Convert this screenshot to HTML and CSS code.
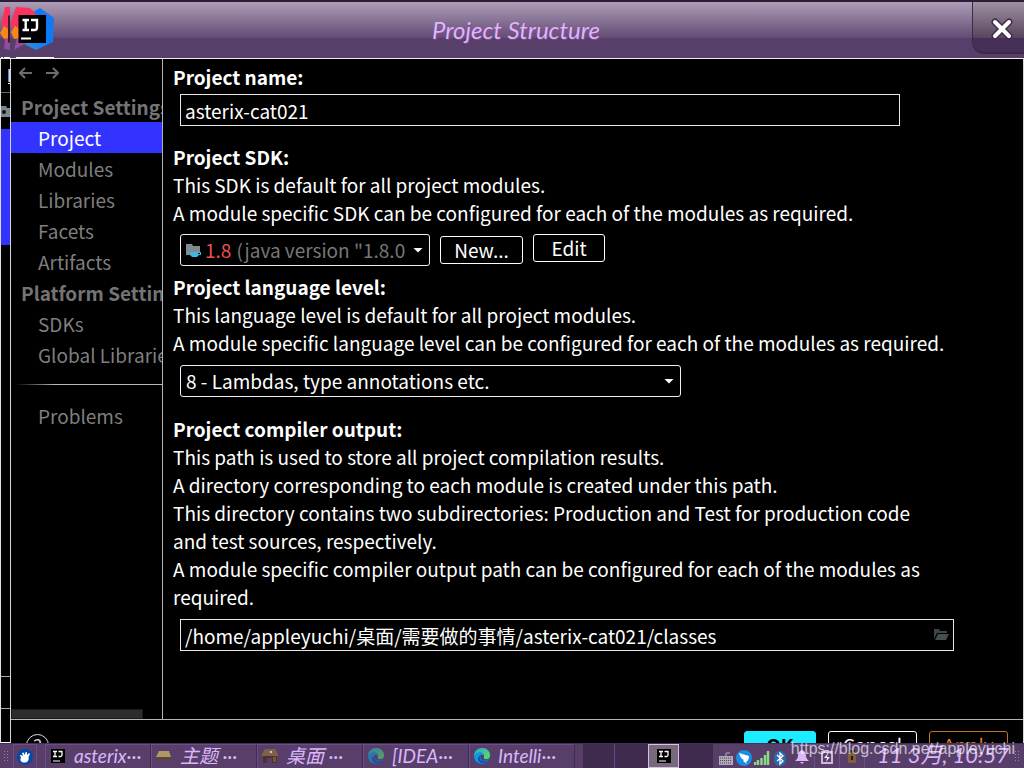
FILE: index.html
```html
<!DOCTYPE html>
<html lang="en">
<head>
<meta charset="utf-8">
<title>Project Structure</title>
<link rel="stylesheet" href="styles.css">
</head>
<body>
<svg class="defs" aria-hidden="true">
  <defs>
    <linearGradient id="ijBlue" x1="0" y1="1" x2="1" y2="0"><stop offset="0" stop-color="#3d8bd0"/><stop offset=".5" stop-color="#087cfa"/><stop offset="1" stop-color="#1d74ea"/></linearGradient>
    <linearGradient id="ijPink" x1="0" y1="0" x2="0" y2="1"><stop offset="0" stop-color="#fe315d"/><stop offset=".45" stop-color="#f43564"/><stop offset="1" stop-color="#7a50b0"/></linearGradient>
    <linearGradient id="edgeTop" x1="0" y1="0" x2="1" y2="1"><stop offset="0" stop-color="#25a9e0"/><stop offset="1" stop-color="#64e04a"/></linearGradient>
    <symbol id="edge" viewBox="0 0 16 16">
      <circle cx="8" cy="8" r="8" fill="#1379cf"/>
      <path d="M0 8C0 3 4 0 8 0c5 0 8 3.500 8 7 0 3-2 4-4 4-2.500 0-3-1-2.300-1.800C11 7 9 4.500 6 4.500 3 4.500 1 6 0 8z" fill="url(#edgeTop)"/>
      <path d="M5.500 8C4 11.500 7 15 11 15.400 7 17 0 14 .2 8 1.500 5 4 4.500 6 4.600c2 0 3.500 1.400 3.500 3C8 6.500 6 6.800 5.500 8z" fill="#1499e3"/>
      <path d="M6 7.500C4 11 8 15 14.500 13 11 17 5 16 4 12c-.5-2 .5-4 2-4.500z" fill="#0c58a8"/>
      <path d="M9.700 9.200c.6-1.600-1-3.200-3-2.200-1.200 2.500 1 5.800 5 5.600 2 0 3-.8 3.500-1.600-3 1.200-5.800.2-5.500-1.800z" fill="#573f6a"/>
    </symbol>
    <symbol id="ij" viewBox="0 0 14 14">
      <path d="M0 0h14v14H0z" fill="#000"/>
      <path d="M2 2.500h4M4 2.500v5M2 7.500h4M7.500 2.500h3.500v3.500q0 1.500-1.500 1.500H7.500" fill="none" stroke="#fff" stroke-width="1.300"/>
      <path d="M2 11.500h7v1H2z" fill="#fff"/>
    </symbol>
  </defs>
</svg>

<header class="titlebar">
  <svg class="logo" viewBox="0 0 54 51" aria-hidden="true">
    <path d="M5 0h5v43l-6-1 2-18-5-7z" fill="url(#ijPink)"/>
    <path d="M0 26l4-7 4 3v9l-4 1z" fill="#f88719"/>
    <path d="M9 8.500v27" stroke="#111" stroke-width="1.500"/>
    <path d="M28 8l12-7 14 10-1 24-17 8-12-6z" fill="url(#ijBlue)"/>
    <path d="M16 0l14 1 8 8-10 26-14 8 4-16-8-9z" fill="url(#ijPink)"/>
    <path d="M11 25l4-6 5 3v9l-6 1z" fill="#f88719"/>
    <path d="M36 24l12-15-4-3-6 3z" fill="#4b67d8"/>
    <path d="M18.500 8h27.500v28H18.500z" fill="#000"/>
    <path d="M22.500 13h6.500M25.700 13v10M22.500 23h6.500M31 13h6v7.500q0 2.500-2.500 2.500H31" fill="none" stroke="#fff" stroke-width="2.400"/>
    <path d="M21 30.500h10v2H21z" fill="#fff"/>
    <path d="M1 50.500h2M4 50.500h6M16 50.500h38" stroke="#fff"/>
  </svg>
  <h1 class="title">Project Structure</h1>
  <button class="close" aria-label="Close">
    <svg viewBox="0 0 22 22" aria-hidden="true"><path d="M4 4l14 14M18 4L4 18" stroke="#402d4c" stroke-width="7" stroke-linecap="round"/><path d="M4 4l14 14M18 4L4 18" stroke="#fff" stroke-width="4" stroke-linecap="round"/></svg>
  </button>
</header>

<div class="workspace">
  <aside class="backdrop" aria-hidden="true">
    <div class="menu-edge"></div>
    <div class="path-edge"><svg viewBox="0 0 9 12"><path d="M0 1h5l1 2h3v9H0z" fill="#7c868c"/><circle cx="3" cy="7" r="2" fill="#111"/></svg></div>
    <div class="tree-edge"></div>
    <div class="blank-edge"></div>
    <div class="panel-edge"></div>
    <div class="status-edge"></div>
  </aside>

  <main class="dialog">
    <div class="panes">
      <nav class="sidebar">
        <div class="history">
          <button aria-label="Back"><svg viewBox="0 0 14 12"><path d="M13 6H1M6 1L1 6l5 5"/></svg></button>
          <button aria-label="Forward"><svg viewBox="0 0 14 12"><path d="M1 6h12M8 1l5 5-5 5"/></svg></button>
        </div>
        <h2>Project Settings</h2>
        <a class="selected" href="#project">Project</a>
        <a href="#modules">Modules</a>
        <a href="#libraries">Libraries</a>
        <a href="#facets">Facets</a>
        <a href="#artifacts">Artifacts</a>
        <h2>Platform Settings</h2>
        <a href="#sdks">SDKs</a>
        <a href="#global">Global Libraries</a>
        <div class="separator"></div>
        <a href="#problems">Problems</a>
        <div class="scrollbar"></div>
      </nav>

      <form class="content" id="project">
        <section>
          <label class="heading" for="name">Project name:</label>
          <input class="field name" id="name" type="text" value="asterix-cat021">
        </section>
        <section>
          <label class="heading" for="sdk">Project SDK:</label>
          <p>This SDK is default for all project modules.</p>
          <p>A module specific SDK can be configured for each of the modules as required.</p>
          <div class="sdk-row">
            <div class="combo sdk">
              <svg class="sdk-icon" viewBox="0 0 15 15" aria-hidden="true"><path d="M0 1h6l1 2h7v6H4v3H0z" fill="#7f8b91"/><path d="M4 9h11v3h-2l-2 2H6l-2-2z" fill="#40b6e0"/><path d="M12 10.500h2" stroke="#000"/></svg>
              <span class="missing">1.8</span>
              <select id="sdk"><option>(java version "1.8.0</option></select>
            </div>
            <button class="btn" type="button">New...</button>
            <button class="btn edit" type="button">Edit</button>
          </div>
        </section>
        <section>
          <label class="heading" for="level">Project language level:</label>
          <p>This language level is default for all project modules.</p>
          <p>A module specific language level can be configured for each of the modules as required.</p>
          <div class="combo level">
            <select id="level"><option>8 - Lambdas, type annotations etc.</option></select>
          </div>
        </section>
        <section>
          <label class="heading" for="output">Project compiler output:</label>
          <p>This path is used to store all project compilation results.</p>
          <p>A directory corresponding to each module is created under this path.</p>
          <p>This directory contains two subdirectories: Production and Test for production code<br>and test sources, respectively.</p>
          <p>A module specific compiler output path can be configured for each of the modules as<br>required.</p>
          <div class="field path">
            <input id="output" type="text" value="/home/appleyuchi/桌面/需要做的事情/asterix-cat021/classes">
            <button type="button" aria-label="Browse"><svg viewBox="0 0 15 12"><path d="M0 0h5l1 2h7v2H3L0 10z" fill="#3f464a"/><path d="M4 5h11l-3 6H1z" fill="#464e52"/></svg></button>
          </div>
        </section>
      </form>
    </div>
    <footer class="actions">
      <button class="help" aria-label="Help">?</button>
      <div class="buttons">
        <button class="btn ok">OK</button>
        <button class="btn cancel">Cancel</button>
        <button class="btn apply">Apply</button>
      </div>
    </footer>
  </main>
</div>

<div class="taskbar">
  <span class="grip"></span>
  <button class="launcher" aria-label="Applications"><svg viewBox="0 0 16 16"><circle cx="8" cy="8" r="8" fill="#0648a8"/><path d="M4 8L2.500 6.500 4 6l2 1-1-3 1.500-.5L8 6l.5-3 1.500.2V6l2-2 1 1-1.500 3c1 4-2 6-4.500 5.500C5 13.500 3 12 3.500 10z" fill="#fff"/></svg></button>
  <div class="tasks">
    <button><svg viewBox="-1 -1 16 16"><use href="#ij" width="14" height="14"/></svg><span>asterix···</span></button>
    <button><svg viewBox="0 0 16 14"><path d="M3 2h10l2 7-1 2H1L0 9z" fill="#5c4630"/><path d="M3 2h10l2 6H0z" fill="#ae9768"/></svg><span>主题 ···</span></button>
    <button><svg viewBox="0 0 16 16"><path d="M1 6h14v9h-5v-5H5v5H1z" fill="#4a3428"/><path d="M3 1h10l3 5v2H0V6z" fill="#80604a"/><path d="M11 9h3v5h-3z" fill="#775742"/><path d="M7 4l3-1v2z" fill="#eee"/></svg><span>桌面 ···</span></button>
    <button><svg class="dim" viewBox="0 0 16 16"><use href="#edge"/></svg><span>[IDEA···</span></button>
    <button><svg viewBox="0 0 16 16"><use href="#edge"/></svg><span>Intelli···</span></button>
  </div>
  <div class="pager">
    <span class="desk"></span>
    <button class="active-desk" aria-label="Workspace"><svg viewBox="0 0 14 14"><use href="#ij"/></svg></button>
  </div>
  <div class="tray">
    <svg viewBox="0 0 16 16"><path d="M1 6h14v9H1z" fill="#b3aab8"/><path d="M2 8h12M2 10.500h12M2 13h12" stroke="#4d405a" stroke-dasharray="1 1"/><path d="M8 6V3h4" fill="none" stroke="#b3aab8"/></svg>
    <svg viewBox="0 0 16 16"><circle cx="8" cy="8" r="8" fill="#178de6"/><path d="M3 3l10 3c0 3-1 5-3 6l1 2-4-3 1-1C5 9 4 6 3 3z" fill="#fff"/></svg>
    <svg viewBox="0 0 16 16"><path d="M1 12v3M4 10v5M7.500 8v7M11 5v10M14 1v14" stroke="#8ad987" stroke-width="2.500"/></svg>
    <svg viewBox="0 0 16 16"><rect x="2" y="1" width="12" height="15" rx="6" fill="#266bb0"/><path d="M5 5l6 6-3 3V3l3 3-6 5" fill="none" stroke="#fff" stroke-width="1.300"/></svg>
  </div>
  <button class="applet" aria-label="Notifications"><svg viewBox="0 0 14 14"><path d="M7 0c3 1 4 3 4 6 0 2 1 3 3 5H0c2-2 3-3 3-5 0-3 1-5 4-6zM5 12h4l-2 2z" fill="#dfb9f5"/></svg></button>
  <button class="applet" aria-label="Power"><svg viewBox="0 0 14 14"><path d="M2 2h10v11H2zM5 1h4" fill="none" stroke="#d0b5df" stroke-width="2"/><path d="M8 3L4 8h3l-1 4 4-5H7z" fill="#eee"/></svg></button>
  <button class="applet" aria-label="Screen lock"><svg viewBox="0 0 14 14"><path d="M3 3h8v10H3z" fill="#805f3d"/><path d="M5 3V1h4v2M7 6v4" fill="none" stroke="#251c19" stroke-width="2"/></svg></button>
  <time class="clock">11 3月, 10:57</time>
  <span class="grip"></span>
</div>
<div class="watermark">https://blog.csdn.net/appleyuchi</div>
</body>
</html>
```
FILE: styles.css
```css
* { box-sizing: border-box; }

body {
  position: relative;
  display: flex;
  flex-direction: column;
  height: 100vh;
  margin: 0;
  overflow: hidden;
  background: #000;
  color: #fff;
  font-family: "Noto Sans CJK SC", "Noto Sans", sans-serif;
  font-size: 19px;
  line-height: 28px;
}

button, input, select { font: inherit; color: inherit; }
button { padding: 0; border: 0; background: none; }
h1, h2, p { margin: 0; }
svg { display: block; flex: none; }
.defs { position: absolute; width: 0; height: 0; }

/* Title bar */
.titlebar {
  display: grid;
  grid-template-columns: 54px 1fr 52px;
  flex: none;
  height: 59px;
  border-top: 2px solid #2d1e38;
  border-bottom: 1px solid #f0eaf2;
  background: linear-gradient(#ad9db6, #634b75 36px, #573f6a 36px);
}
.logo { width: 54px; height: 51px; align-self: end; }
.title {
  padding-top: 14px;
  padding-left: 6px;
  text-align: center;
  font: italic 400 24px/28px Lato, sans-serif;
  color: #dcb6fa;
  text-shadow: 1px 1px 1px #8b4a92;
}
.close {
  display: grid;
  place-items: center;
  height: 52px;
  padding-left: 6px;
  padding-top: 4px;
  border: solid #3d2a49;
  border-width: 0 0 2px 1px;
  border-radius: 0 0 0 12px;
  background: linear-gradient(#9d92a2, #58445f 36px, #46305a 36px);
}
.close svg { width: 22px; height: 22px; }

/* Window behind the dialog */
.workspace { display: flex; flex: 1; min-height: 0; }
.backdrop {
  display: flex;
  flex-direction: column;
  width: 10px;
  border-left: 1px solid #ddd;
  border-bottom: 1px solid #fff;
}
.menu-edge { height: 34px; border-bottom: 1px solid #666; background: linear-gradient(#fff, #fff) 7px 24px / 3px 1px no-repeat, linear-gradient(90deg, #1b65b5, #fff) 7px 10px / 2px 13px no-repeat; }
.path-edge { height: 36px; padding-top: 12px; }
.path-edge svg { width: 9px; height: 12px; }
.tree-edge { height: 116px; background: #33f; }
.blank-edge { flex: 1; }
.panel-edge { height: 32px; border-top: 1px solid #aaa; }
.status-edge { height: 34px; border-top: 1px solid #aaa; }

/* Dialog */
.dialog {
  display: flex;
  flex: 1;
  flex-direction: column;
  min-width: 0;
  border: solid #d6d6d6;
  border-width: 0 1px;
}
.panes { display: flex; flex: 1; min-height: 0; }
.sidebar {
  display: flex;
  flex: none;
  flex-direction: column;
  width: 152px;
  overflow: hidden;
  border-right: 1px solid #b4b4b4;
  color: #7e7e7e;
  white-space: nowrap;
  line-height: 31px;
}
.history { display: flex; align-items: flex-start; gap: 12px; height: 32px; padding: 8px; }
.history svg { width: 14px; height: 12px; fill: none; stroke: #6c6c6c; stroke-width: 2; }
.sidebar h2 { padding-left: 10px; font-size: 19px; line-height: 31px; font-weight: 700; color: #747474; }
.sidebar a { padding-left: 27px; color: inherit; text-decoration: none; }
.sidebar .selected { background: #33f; color: #fff; }
.separator {
  height: 30px;
  margin-left: 4px;
  background: linear-gradient(90deg, #000, #b8b8b8 40px) 0 14px / 100% 1px no-repeat;
}
.scrollbar { width: 132px; height: 10px; margin-top: auto; background: #2d2d2d; border: 1px solid #1b1b1b; }

.content { flex: 1; min-width: 0; padding: 4px 60px 0 10px; overflow: hidden; }
.content section { display: flex; flex-direction: column; align-items: flex-start; }
.content p { white-space: nowrap; }
.heading { font-weight: 700; }
.field { height: 32px; margin-left: 7px; padding: 0 4px; border: 1px solid #e8e8e8; background: #000; }
.name { width: 100%; max-width: 720px; margin-top: 3px; margin-bottom: 17px; }
.combo {
  display: flex;
  align-items: center;
  height: 32px;
  padding: 0 6px 0 5px;
  border: 1px solid #f0f0f0;
  border-radius: 3px;
}
.combo::after {
  content: "";
  width: 10px;
  height: 5px;
  background: #fff;
  clip-path: polygon(0 0, 100% 0, 50% 100%);
}
.combo select { flex: 1; min-width: 0; height: 30px; padding: 0; border: 0; background: #000; appearance: none; }
.sdk-row { display: flex; align-items: flex-start; gap: 10px; margin: 7px 0 7px 7px; }
.sdk { width: 250px; }
.sdk select { color: #777; }
.sdk-icon { width: 15px; height: 15px; margin-right: 4px; }
.missing { margin-right: 5px; color: #f05050; }
.btn { height: 28px; border: 1px solid #fff; border-radius: 3px; line-height: 26px; }
.sdk-row .btn { width: 83px; margin-top: 2px; }
.sdk-row .edit { width: 72px; margin-top: 0; }
.level { width: 501px; margin: 8px 0 18px 7px; }
.path { display: flex; align-items: center; width: 100%; max-width: 774px; margin-top: 8px; }
.path input { flex: 1; min-width: 0; height: 30px; padding: 0; border: 0; background: #000; }
.path svg { width: 15px; height: 12px; }

.actions {
  display: flex;
  justify-content: space-between;
  flex: none;
  height: 24px;
  padding: 11px 15px 0;
  overflow: hidden;
  border-top: 1px solid #b4b4b4;
}
.help { width: 23px; height: 23px; margin-top: 3px; border: 1px solid #ddd; border-radius: 50%; color: #ccc; font-size: 19px; line-height: 20px; }
.buttons { display: flex; gap: 12px; }
.ok { width: 72px; border-color: #1cecff; background: #1cecff; color: #000; font-weight: 700; }
.cancel { width: 89px; }
.apply { width: 79px; border-color: #c47320; color: #e07816; }

/* Taskbar */
.taskbar {
  display: flex;
  flex: none;
  height: 25px;
  border-top: 1px solid #443052;
  background: #573f6a;
  color: #dcb6fa;
}
.grip { width: 7px; height: 12px; margin: 6px 3px 0; background: radial-gradient(circle, #9b83a8 1px, #573f6a 1px) 0 0 / 3px 3px; }
.launcher { display: grid; place-items: center; width: 24px; margin-right: 8px; border: solid #704b91; border-width: 1px 1px 0; }
.launcher svg { width: 16px; height: 16px; }
.tasks { display: flex; flex: 0 1 530px; min-width: 0; }
.tasks button {
  display: flex;
  align-items: center;
  flex: 1;
  min-width: 0;
  gap: 8px;
  padding-left: 4px;
  padding-bottom: 2px;
  overflow: hidden;
  border: solid #704b91;
  border-width: 1px 0 0 1px;
  border-right: 1px solid #3d2c4a;
  white-space: nowrap;
  font: italic 19px/21px Lato, "Noto Sans CJK SC", sans-serif;
}
.tasks svg { width: 16px; height: 16px; }
.dim { opacity: .6; }
.pager { display: flex; flex: 1; margin-left: 8px; background: #3f2b4e; }
.desk { width: 32px; margin-right: 33px; border-right: 1px solid #6d478d; }
.active-desk { display: grid; place-items: center; width: 31px; border: 1px solid #dfb9f5; background: #756b79; }
.active-desk svg { width: 14px; height: 14px; }
.tray { display: flex; align-items: center; gap: 2px; padding: 4px 2px 0 5px; }
.tray svg { width: 16px; height: 16px; }
.applet { display: grid; place-items: center; width: 25px; border: solid #704b91; border-width: 1px 1px 0 0; }
.applet svg { width: 14px; height: 14px; }
.clock { width: 146px; padding-right: 2px; text-align: right; white-space: nowrap; font: italic 22px/22px Lato, "Noto Sans CJK SC", sans-serif; }

.watermark {
  position: absolute;
  right: 9px;
  bottom: 10px;
  color: #fff;
  opacity: .65;
  pointer-events: none;
  font: 16px/18px "Liberation Sans", Arial, sans-serif;
}
```
